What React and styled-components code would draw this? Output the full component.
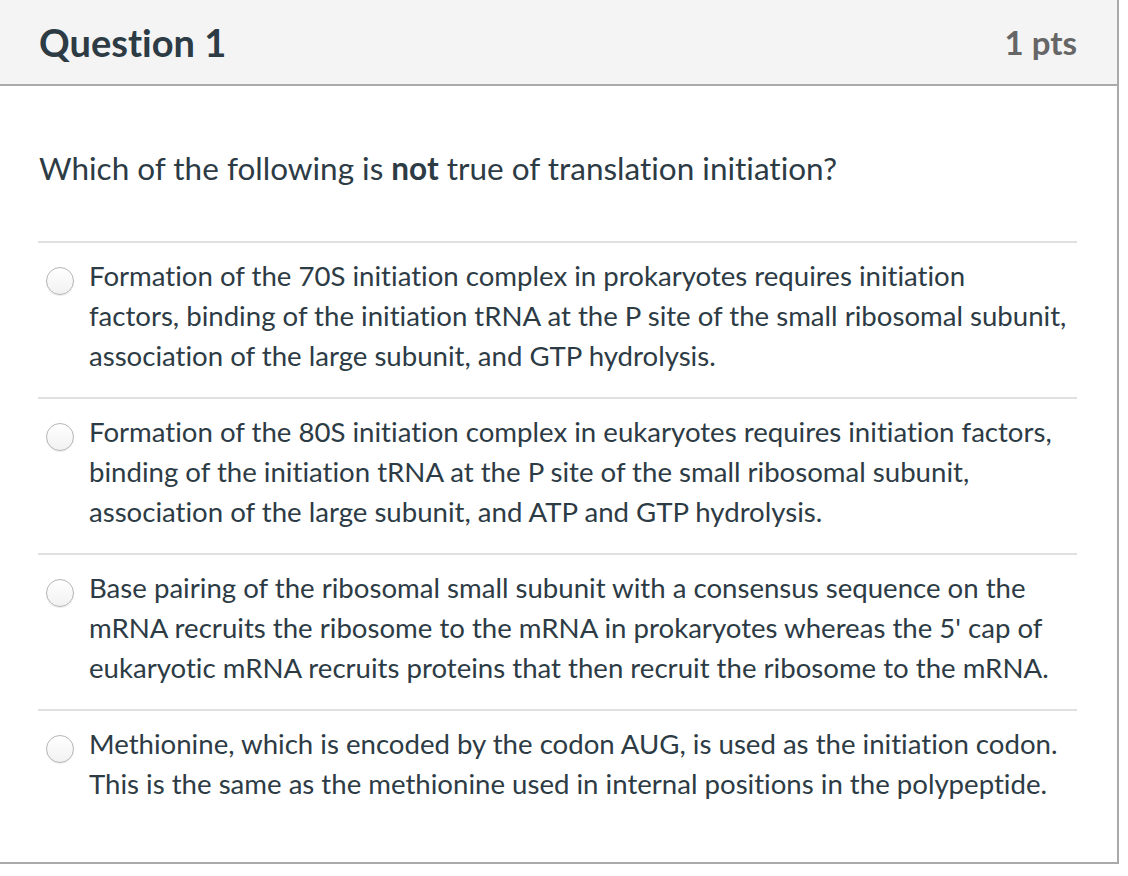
import React from 'react';
import styled, { createGlobalStyle } from 'styled-components';

// answer text kept in the same line breaks as the source quiz
const answers = [
  [
    'Formation of the 70S initiation complex in prokaryotes requires initiation',
    'factors, binding of the initiation tRNA at the P site of the small ribosomal subunit,',
    'association of the large subunit, and GTP hydrolysis.',
  ],
  [
    'Formation of the 80S initiation complex in eukaryotes requires initiation factors,',
    'binding of the initiation tRNA at the P site of the small ribosomal subunit,',
    'association of the large subunit, and ATP and GTP hydrolysis.',
  ],
  [
    'Base pairing of the ribosomal small subunit with a consensus sequence on the',
    "mRNA recruits the ribosome to the mRNA in prokaryotes whereas the 5' cap of",
    'eukaryotic mRNA recruits proteins that then recruit the ribosome to the mRNA.',
  ],
  [
    'Methionine, which is encoded by the codon AUG, is used as the initiation codon.',
    'This is the same as the methionine used in internal positions in the polypeptide.',
  ],
];

const App = () => {
  return (
    <>
      <Global />
      <Card>
        <Header>
          <Title>Question 1</Title>
          <Points>1 pts</Points>
        </Header>
        <Body>
          <Prompt>
            Which of the following is <strong>not</strong> true of translation initiation?
          </Prompt>
          <AnswerList>
            {answers.map((lines, i) => (
              <Answer key={i}>
                <Radio />
                <AnswerText>
                  {lines.map((line, j) => (
                    <Line key={j}>{line}</Line>
                  ))}
                </AnswerText>
              </Answer>
            ))}
          </AnswerList>
        </Body>
      </Card>
    </>
  );
};

const Global = createGlobalStyle`
  body {
    margin: 0;
    background: #fff;
    font-family: Lato, "Open Sans", sans-serif;
    font-variant-ligatures: none;
    color: #2d3b45;
  }
`;

const Card = styled.div`
  width: 1117px;
  border-right: 2px solid #aaaaaa;
  border-bottom: 2px solid #aaaaaa;
  background: #fff;
  overflow: hidden;
`;

const Header = styled.div`
  height: 84px;
  display: flex;
  align-items: center;
  justify-content: space-between;
  padding: 0 40px 0 39px;
  background: #f4f4f4;
  border-bottom: 2px solid #aaaaaa;
`;

const Title = styled.h2`
  margin: 0;
  font-size: 38px;
  font-weight: 700;
  color: #2d3b45;
`;

const Points = styled.div`
  font-size: 33px;
  font-weight: 700;
  color: #666666;
`;

const Body = styled.div`
  padding: 62px 40px 37px 38px;
`;

const Prompt = styled.div`
  font-size: 31.5px;
  line-height: 40px;
  padding-left: 1px;
  margin-bottom: 53px;
  strong {
    font-weight: 700;
  }
`;

const AnswerList = styled.div`
  display: flex;
  flex-direction: column;
`;

const Answer = styled.div`
  display: flex;
  align-items: flex-start;
  border-top: 2px solid #e0e0e0;
  padding: 13px 0 21px 8px;
`;

const Radio = styled.span`
  flex: none;
  width: 26px;
  height: 26px;
  margin-top: 11px;
  border-radius: 50%;
  border: 1px solid #b5b5b5;
  background: linear-gradient(#ffffff, #f2f2f2);
  box-shadow: 0 1px 1px rgba(0, 0, 0, 0.08);
`;

const AnswerText = styled.div`
  margin-left: 15px;
  font-size: 27.6px;
  line-height: 40px;
  color: #2d3b45;
`;

const Line = styled.span`
  display: block;
  white-space: nowrap;
`;

export default App;
